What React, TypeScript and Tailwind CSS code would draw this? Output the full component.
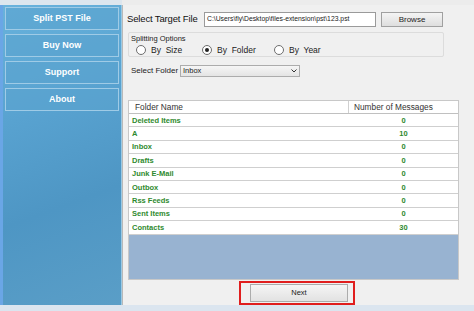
const folders = [
  { name: "Deleted Items", count: 0 },
  { name: "A", count: 10 },
  { name: "Inbox", count: 0 },
  { name: "Drafts", count: 0 },
  { name: "Junk E-Mail", count: 0 },
  { name: "Outbox", count: 0 },
  { name: "Rss Feeds", count: 0 },
  { name: "Sent Items", count: 0 },
  { name: "Contacts", count: 30 },
];

const SideButton = ({ label }: { label: string }) => (
  <div className="h-[23px] flex items-center justify-center border border-[#9fcbe6] bg-[#5aa4cf]/60 text-white text-[9px] font-bold [font-family:'Liberation_Sans',Arial,sans-serif]">
    {label}
  </div>
);

const Radio = ({ label, checked, width }: { label: string; checked?: boolean; width: string }) => (
  <div className={`flex items-center gap-[5px] ${width}`}>
    <span className="w-[10px] h-[10px] rounded-full border border-[#6e6e6e] bg-white flex items-center justify-center">
      {checked && <span className="w-[4px] h-[4px] rounded-full bg-[#222]" />}
    </span>
    <span className="text-[8.5px] text-[#222] whitespace-pre [font-family:'Liberation_Sans',Arial,sans-serif]">{label}</span>
  </div>
);

const App = () => {
  return (
    <div className="w-[474px] h-[311px] overflow-hidden bg-[#dfe7ef] flex flex-col [font-family:'Liberation_Sans',Arial,sans-serif]">
      <div className="h-[5px] flex">
        <div className="w-[122px] bg-[#dde6ee]" />
        <div className="flex-1 bg-[#ececec]" />
      </div>
      <div className="h-[300px] flex">
        {/* sidebar */}
        <div className="w-[122px] flex">
          <div className="w-[3px] bg-[#6aa6e6]" />
          <div className="flex-1 pt-[2px] px-[2px] flex flex-col gap-[4px] bg-[linear-gradient(160deg,#68b2dc_0%,#58a2d0_35%,#4e96c4_65%,#5a9ec7_100%)] border-r border-[#9cc9e3]">
            <SideButton label="Split PST File" />
            <SideButton label="Buy Now" />
            <SideButton label="Support" />
            <SideButton label="About" />
          </div>
        </div>
        {/* main */}
        <div className="flex-1 bg-[#f0f0f0] border-l border-[#b8b8b8] flex flex-col pl-[4px] pr-[15px]">
          <div className="flex items-center mt-[7px] h-[15px]">
            <span className="text-[9.5px] text-[#111] w-[77px] whitespace-nowrap tracking-[-0.15px]">Select Target File</span>
            <div className="w-[172px] h-[15px] bg-white border border-[#9a9a9a] px-[2px] flex items-center text-[6.8px] text-[#222] whitespace-nowrap overflow-hidden">
              C:\Users\fly\Desktop\files-extension\pst\123.pst
            </div>
            <div className="ml-[5px] w-[62px] h-[15px] bg-[linear-gradient(#f4f4f4,#dedede)] border border-[#a0a0a0] flex items-center justify-center text-[8px] text-[#222]">
              Browse
            </div>
          </div>
          <div className="mt-[5px] ml-[1px] w-[316px] h-[25px] border border-[#dcdcdc] rounded-[2px] pl-[2px]">
            <div className="text-[7.5px] text-[#222] leading-[9px] mt-[1px]">Splitting Options</div>
            <div className="flex items-center mt-[1px] pl-[5px]">
              <Radio label="By  Size" width="w-[66px]" />
              <Radio label="By  Folder" checked width="w-[72px]" />
              <Radio label="By  Year" width="w-[60px]" />
            </div>
          </div>
          <div className="flex items-center mt-[8px] ml-[4px] h-[12px]">
            <span className="text-[8px] text-[#222] w-[49px]">Select Folder</span>
            <div className="w-[120px] h-[12px] bg-[linear-gradient(#f6f6f6,#e4e4e4)] border border-[#acacac] flex items-center justify-between px-[2px] text-[7.5px] text-[#222]">
              <span>Inbox</span>
              <svg width="6" height="4" viewBox="0 0 6 4">
                <path d="M0.5 0.5 L3 3 L5.5 0.5" stroke="#333" strokeWidth="1" fill="none" />
              </svg>
            </div>
          </div>
          {/* table */}
          <div className="mt-[23px] ml-[1px] w-[331px] h-[180px] border border-[#c8c8c8] bg-[#98b3d1] flex flex-col">
            <div className="h-[13px] bg-white flex border-b border-[#c0c0c0] text-[8.3px] text-[#333]">
              <div className="w-[220px] border-r border-[#d0d0d0] pl-[6px] flex items-center">Folder Name</div>
              <div className="flex-1 flex items-center pl-[5px]">Number of Messages</div>
            </div>
            {folders.map((f) => (
              <div
                key={f.name}
                className="h-[13.4px] bg-white flex items-center border-b border-[#cfcfcf] text-[7.5px] font-bold text-[#2e8a2e]"
              >
                <div className="w-[220px] pl-[3px]">{f.name}</div>
                <div className="flex-1 text-center">{f.count}</div>
              </div>
            ))}
          </div>
          <div className="mt-[1px] ml-[112px] w-[116px] h-[24px] border-2 border-[#e01e1e] flex items-center pl-[9px]">
            <div className="w-[98px] h-[18px] bg-[linear-gradient(#f5f5f5,#e2e2e2)] border border-[#acacac] flex items-center justify-center text-[7.5px] text-[#222]">
              Next
            </div>
          </div>
        </div>
      </div>
      <div className="h-[6px] bg-[#dbe5ef]" />
    </div>
  );
};

export default App;
